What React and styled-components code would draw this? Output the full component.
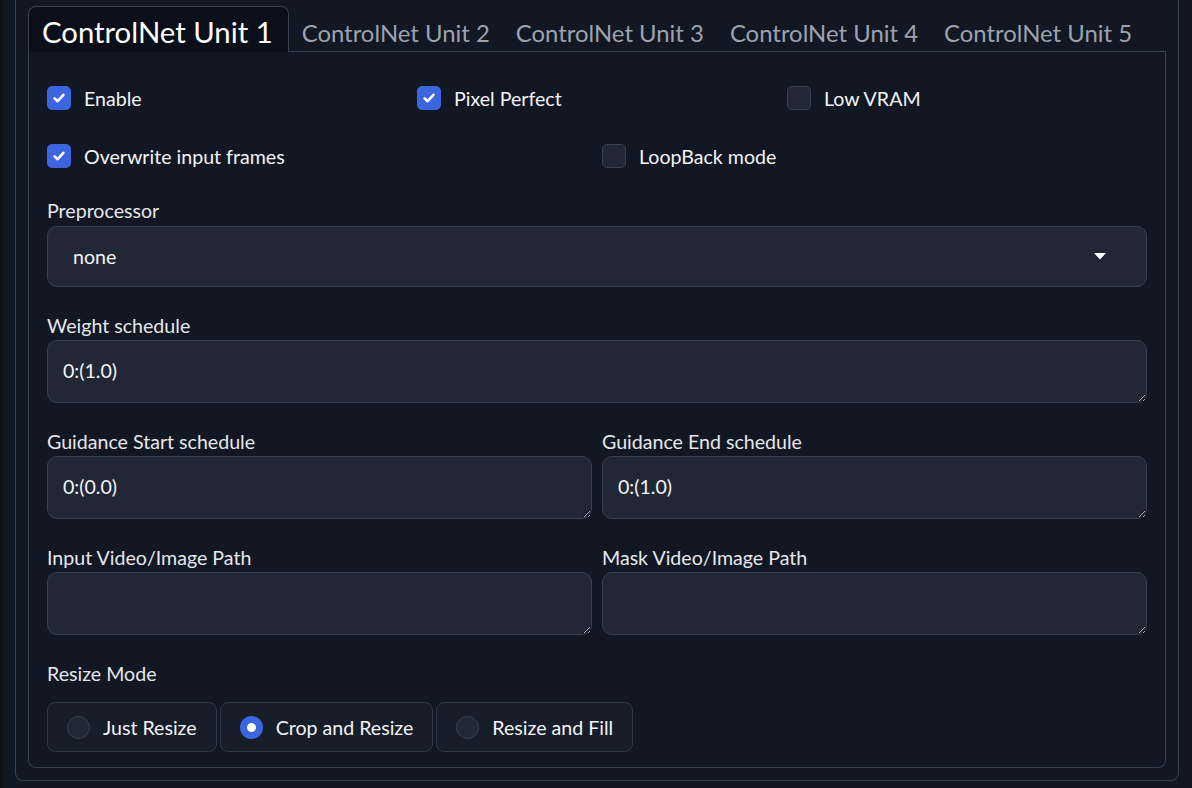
import styled, { createGlobalStyle } from "styled-components";

const GlobalStyle = createGlobalStyle`
  html, body {
    margin: 0;
    padding: 0;
    background: #121724;
    color-scheme: dark;
  }
  * {
    box-sizing: border-box;
  }
`;

const tabs = ["ControlNet Unit 1", "ControlNet Unit 2", "ControlNet Unit 3", "ControlNet Unit 4", "ControlNet Unit 5"];

const CheckIcon = () => (
  <svg width="14" height="14" viewBox="0 0 14 14" fill="none">
    <path d="M2.6 7.4 L5.6 10.2 L11.4 3.8" stroke="#fff" strokeWidth="2.6" strokeLinecap="round" strokeLinejoin="round" />
  </svg>
);

const Checkbox = ({ label, checked }) => (
  <CheckItem>
    <CheckBox checked={checked}>{checked && <CheckIcon />}</CheckBox>
    <span>{label}</span>
  </CheckItem>
);

const Field = ({ label, children }) => (
  <FieldBox>
    <Label>{label}</Label>
    {children}
  </FieldBox>
);

const App = () => {
  return (
    <Page>
      <GlobalStyle />
      <Frame>
        <TabBar>
          {tabs.map((t, i) => (
            <Tab key={t} active={i === 0}>{t}</Tab>
          ))}
        </TabBar>
        <Panel>
          <CheckRow cols={3}>
            <Checkbox label="Enable" checked />
            <Checkbox label="Pixel Perfect" checked />
            <Checkbox label="Low VRAM" />
          </CheckRow>
          <CheckRow cols={2} second>
            <Checkbox label="Overwrite input frames" checked />
            <Checkbox label="LoopBack mode" />
          </CheckRow>

          <Field label="Preprocessor">
            <Dropdown>
              <span>none</span>
              <svg width="12" height="7" viewBox="0 0 12 7">
                <path d="M0 0 L12 0 L6 6.5 Z" fill="#fff" />
              </svg>
            </Dropdown>
          </Field>

          <Field label="Weight schedule">
            <TextArea defaultValue="0:(1.0)" />
          </Field>

          <TwoCol>
            <Field label="Guidance Start schedule">
              <TextArea defaultValue="0:(0.0)" />
            </Field>
            <Field label="Guidance End schedule">
              <TextArea defaultValue="0:(1.0)" />
            </Field>
          </TwoCol>

          <TwoCol>
            <Field label="Input Video/Image Path">
              <TextArea defaultValue="" />
            </Field>
            <Field label="Mask Video/Image Path">
              <TextArea defaultValue="" />
            </Field>
          </TwoCol>

          <FieldBox>
            <Label radio>Resize Mode</Label>
            <RadioGroup>
              <RadioButton>
                <RadioDot />
                <span>Just Resize</span>
              </RadioButton>
              <RadioButton>
                <RadioDot checked />
                <span>Crop and Resize</span>
              </RadioButton>
              <RadioButton>
                <RadioDot />
                <span>Resize and Fill</span>
              </RadioButton>
            </RadioGroup>
          </FieldBox>
        </Panel>
      </Frame>
    </Page>
  );
};

const Page = styled.div`
  min-height: 788px;
  border-left: 3px solid #0c0e14;
  padding: 7px 13px 7px 12px;
  font-family: Lato, "Liberation Sans", sans-serif;
`;

const Frame = styled.div`
  border: 1px solid #394150;
  border-top: none;
  border-radius: 0 0 8px 8px;
  padding: 0 12px 12px 12px;
  margin-top: -7px;
  padding-top: 7px;
`;

const TabBar = styled.div`
  display: flex;
  align-items: flex-end;
  height: 45px;
  border-bottom: 1px solid #394150;
`;

const Tab = styled.div`
  display: flex;
  align-items: center;
  height: ${(p) => (p.active ? "46px" : "44px")};
  padding: ${(p) => (p.active ? "4px 15px 0 13px" : "6px 13px 0 13px")};
  margin-bottom: ${(p) => (p.active ? "-1px" : "0")};
  font-size: ${(p) => (p.active ? "29.3px" : "23.9px")};
  color: ${(p) => (p.active ? "#ffffff" : "#9ca3af")};
  background: ${(p) => (p.active ? "#0b0f19" : "transparent")};
  border: ${(p) => (p.active ? "1px solid #394150" : "none")};
  border-bottom: none;
  border-radius: 8px 8px 0 0;
  white-space: nowrap;
`;

const Panel = styled.div`
  border: 1px solid #394150;
  border-top: none;
  border-radius: 0 0 8px 8px;
  padding: 34px 18px 15px 18px;
  display: flex;
  flex-direction: column;
`;

const CheckRow = styled.div`
  display: grid;
  grid-template-columns: repeat(${(p) => p.cols}, 1fr);
  column-gap: 10px;
  margin-top: ${(p) => (p.second ? "34px" : "0")};
  margin-bottom: ${(p) => (p.second ? "32px" : "0")};
`;

const CheckItem = styled.label`
  display: flex;
  align-items: center;
  gap: 13px;
  height: 24px;
  font-size: 19.6px;
  color: #f3f4f6;
`;

const CheckBox = styled.div`
  width: 24px;
  height: 24px;
  flex-shrink: 0;
  border-radius: 5px;
  display: flex;
  align-items: center;
  justify-content: center;
  background: ${(p) => (p.checked ? "#3b66e0" : "#212735")};
  border: 1px solid ${(p) => (p.checked ? "#3b66e0" : "#394150")};
`;

const FieldBox = styled.div`
  display: flex;
  flex-direction: column;
  margin-bottom: 28px;
  &:last-child {
    margin-bottom: 0;
  }
`;

const Label = styled.div`
  font-size: 19.6px;
  line-height: 22px;
  color: #e5e7eb;
  margin-bottom: ${(p) => (p.radio ? "17px" : "3px")};
`;

const Dropdown = styled.div`
  height: 61px;
  margin-top: 1px;
  display: flex;
  align-items: center;
  justify-content: space-between;
  padding: 0 40px 0 25px;
  background: #212735;
  border: 1px solid #394150;
  border-radius: 10px;
  font-size: 19.6px;
  color: #f3f4f6;
`;

const TextArea = styled.textarea`
  display: block;
  width: 100%;
  height: 63px;
  resize: vertical;
  padding: 18px 15px;
  background: #212735;
  border: 1px solid #394150;
  border-radius: 10px;
  font-family: Lato, "Liberation Sans", sans-serif;
  font-size: 19.6px;
  line-height: 24px;
  color: #f3f4f6;
  outline: none;
  overflow: hidden;
`;

const TwoCol = styled.div`
  display: grid;
  grid-template-columns: 1fr 1fr;
  column-gap: 10px;
  & > ${FieldBox} {
    margin-bottom: 28px;
  }
`;

const RadioGroup = styled.div`
  display: flex;
  gap: 3px;
`;

const RadioButton = styled.label`
  display: flex;
  align-items: center;
  gap: 13px;
  height: 50px;
  padding: 0 19px;
  background: #181d2a;
  border: 1px solid #2f3645;
  border-radius: 8px;
  font-size: 19.6px;
  color: #f3f4f6;
`;

const RadioDot = styled.span`
  width: 23px;
  height: 23px;
  border-radius: 50%;
  flex-shrink: 0;
  background: ${(p) => (p.checked ? "#fff" : "#212735")};
  border: ${(p) => (p.checked ? "7.5px solid #3b66e0" : "1px solid #394150")};
`;

export default App;
